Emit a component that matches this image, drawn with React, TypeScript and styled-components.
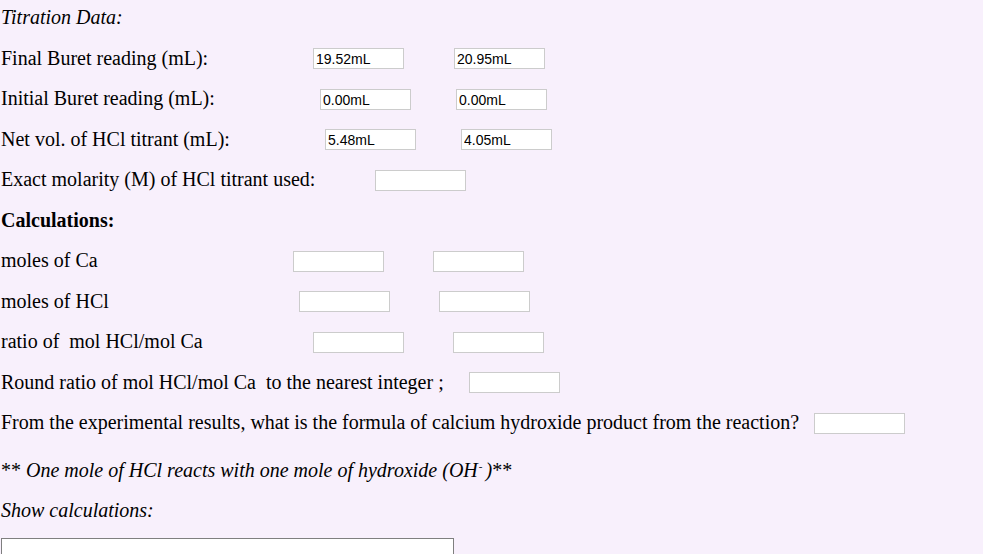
import React from "react";
import styled, { createGlobalStyle } from "styled-components";

const Global = createGlobalStyle`
  html, body { margin: 0; padding: 0; background: #f8f0fc; }
  body { font-family: "Liberation Serif", "Times New Roman", serif; color: #000; }
`;

const Page = styled.div`
  padding: 6px 0 0 1px;
  display: flex;
  flex-direction: column;
  gap: 18.5px;
  height: 554px;
  box-sizing: border-box;
  overflow: hidden;
`;

const Row = styled.div<{ $mt?: number }>`
  display: flex;
  align-items: center;
  height: 22px;
  font-size: 20px;
  line-height: 22px;
  white-space: pre;
  margin-top: ${(p) => p.$mt ?? 0}px;
`;

const Label = styled.span<{ $w?: number; $italic?: boolean; $bold?: boolean }>`
  display: inline-block;
  width: ${(p) => (p.$w ? `${p.$w}px` : "auto")};
  flex-shrink: 0;
  font-style: ${(p) => (p.$italic ? "italic" : "normal")};
  font-weight: ${(p) => (p.$bold ? 700 : 400)};
`;

const Em = styled.em`
  font-style: italic;
`;

const Sup = styled.sup`
  font-size: 11px;
  line-height: 0;
  vertical-align: 7px;
  margin: 0 3px 0 1px;
`;

const Field = styled.input<{ $ml?: number }>`
  box-sizing: border-box;
  width: 91px;
  height: 21px;
  margin: 2px 0 0 ${(p) => p.$ml ?? 0}px;
  padding: 1px 2px 0;
  border: 1px solid #cccccc;
  background: #ffffff;
  font-family: "Liberation Sans", Arial, sans-serif;
  font-size: 14px;
  color: #000;
  outline: none;
`;

const Notes = styled.textarea`
  box-sizing: border-box;
  width: 453px;
  height: 60px;
  margin: 0;
  border: 1px solid #7f7f7f;
  background: #fff;
  resize: none;
  display: block;
`;

const TextAreaWrap = styled.div`
  margin-top: -1.5px;
`;

export default function App() {
  return (
    <>
      <Global />
      <Page>
        <Row>
          <Label $italic>Titration Data:</Label>
        </Row>
        <Row>
          <Label $w={312}>Final Buret reading (mL):</Label>
          <Field defaultValue="19.52mL" />
          <Field $ml={50} defaultValue="20.95mL" />
        </Row>
        <Row>
          <Label $w={319}>Initial Buret reading (mL):</Label>
          <Field defaultValue="0.00mL" />
          <Field $ml={45} defaultValue="0.00mL" />
        </Row>
        <Row>
          <Label $w={324}>Net vol. of HCl titrant (mL):</Label>
          <Field defaultValue="5.48mL" />
          <Field $ml={45} defaultValue="4.05mL" />
        </Row>
        <Row>
          <Label $w={374}>Exact molarity (M) of HCl titrant used:</Label>
          <Field />
        </Row>
        <Row>
          <Label $bold>Calculations:</Label>
        </Row>
        <Row>
          <Label $w={292}>moles of Ca</Label>
          <Field />
          <Field $ml={49} />
        </Row>
        <Row>
          <Label $w={298}>moles of HCl</Label>
          <Field />
          <Field $ml={49} />
        </Row>
        <Row>
          <Label $w={312}>ratio of  mol HCl/mol Ca</Label>
          <Field />
          <Field $ml={49} />
        </Row>
        <Row>
          <Label $w={468}>Round ratio of mol HCl/mol Ca  to the nearest integer ;</Label>
          <Field />
        </Row>
        <Row>
          <Label $w={813}>
            From the experimental results, what is the formula of calcium hydroxide product from the reaction?
          </Label>
          <Field />
        </Row>
        <Row $mt={7.5}>
          <Label>
            ** <Em>One mole of HCl reacts with one mole of hydroxide (OH</Em>
            <Sup>-</Sup>
            <Em>)</Em>**
          </Label>
        </Row>
        <Row $mt={-0.5}>
          <Label $italic>Show calculations:</Label>
        </Row>
        <TextAreaWrap>
          <Notes />
        </TextAreaWrap>
      </Page>
    </>
  );
}
